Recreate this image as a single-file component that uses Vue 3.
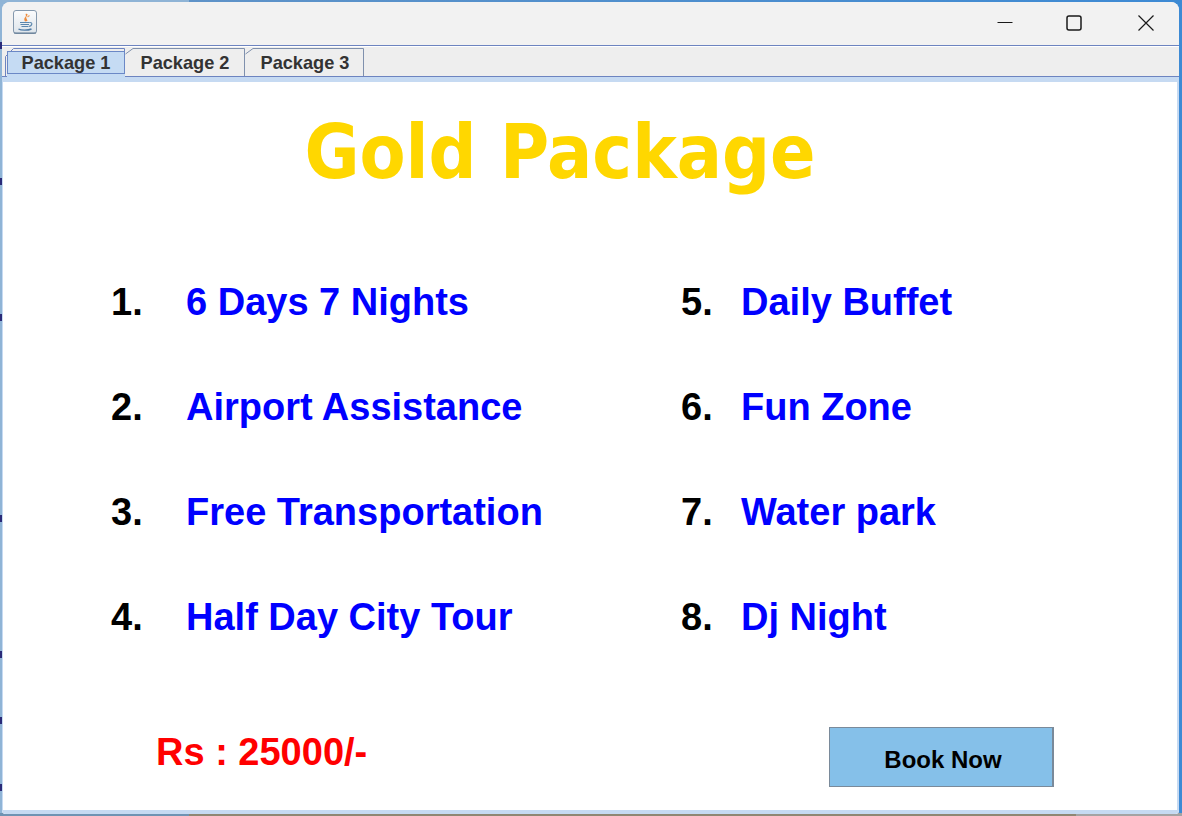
<template>
  <div class="desktop">
    <span v-for="y in marks" :key="y" class="mark" :style="{ top: y + 'px' }"></span>
    <div class="strip"></div>
    <div class="window">
      <header class="titlebar">
        <div class="appicon">
          <svg width="24" height="24" viewBox="0 0 24 24">
            <defs>
              <linearGradient id="ig" x1="0" y1="0" x2="0" y2="1">
                <stop offset="0" stop-color="#fbfcfd" />
                <stop offset="1" stop-color="#dde4ea" />
              </linearGradient>
            </defs>
            <rect x="0.5" y="0.5" width="23" height="23" rx="2.5" fill="url(#ig)" stroke="#8498ad" />
            <path d="M1 23 H23" stroke="#5c7690" stroke-width="1" />
            <path d="M12.5 4 C14.5 3.5 15.5 4.5 13.5 6.5 C12.5 7.5 14 9 14.5 11 L12 11.5 C10.5 9.5 11.5 8 12.5 6.8 C13 6 13 5 12.5 4 Z" fill="#ee8a3c" />
            <path d="M14.5 7 L16.5 5.5" stroke="#f0a060" stroke-width="1.2" />
            <path d="M7 12.5 H16.5 M7.5 14.5 H16 M8.5 16.5 H15" stroke="#5b86ad" stroke-width="1.2" fill="none" />
            <path d="M16.5 12.5 C20 12 19.5 16 15.5 16.5" fill="none" stroke="#5b86ad" stroke-width="1.1" />
            <path d="M5.5 19 C8 20.5 15 20.5 18.5 19" fill="none" stroke="#4f7ba6" stroke-width="1.4" />
          </svg>
        </div>
        <div class="controls">
          <button class="ctl">
            <svg width="16" height="16" viewBox="0 0 16 16"><path d="M0.5 7.5 H15.5" stroke="#1a1a1a" stroke-width="1" /></svg>
          </button>
          <button class="ctl">
            <svg width="16" height="16" viewBox="0 0 16 16"><rect x="1" y="1" width="14" height="14" rx="2" fill="none" stroke="#1a1a1a" stroke-width="1.5" /></svg>
          </button>
          <button class="ctl close">
            <svg width="16" height="16" viewBox="0 0 16 16"><path d="M0.5 0.5 L15.5 15.5 M15.5 0.5 L0.5 15.5" stroke="#1a1a1a" stroke-width="1.2" /></svg>
          </button>
        </div>
      </header>
      <nav class="tabs">
        <div v-for="(t, i) in tabs" :key="t" class="tab" :class="{ active: i === 0 }">
          <svg class="outline" width="120" height="28" viewBox="0 0 120 28">
            <path v-if="i === 0" d="M0.5 28 V8.5 L8.5 0.5 H119.5 V28" fill="none" stroke="#6d84c0" />
            <path v-else :d="i === 2 ? 'M0.5 6 L8 0.5 H118.5 V28' : 'M0.5 6 L8 0.5 H119.5 V28'" fill="none" stroke="#7f90ad" />
          </svg>
          <span class="label">{{ t }}</span>
        </div>
      </nav>
      <main class="panel">
        <h1 class="title">Gold Package</h1>
        <div class="list">
          <div class="col first">
            <div v-for="(it, i) in left" :key="it" class="row">
              <span class="num">{{ i + 1 }}.</span><span class="txt">{{ it }}</span>
            </div>
          </div>
          <div class="col second">
            <div v-for="(it, i) in right" :key="it" class="row">
              <span class="num">{{ i + 5 }}.</span><span class="txt">{{ it }}</span>
            </div>
          </div>
        </div>
        <footer class="foot">
          <span class="price">Rs : 25000/-</span>
          <button class="book">Book Now</button>
        </footer>
      </main>
    </div>
  </div>
</template>

<script setup>
const marks = [42, 178, 314, 515, 651, 717, 784]
const tabs = ['Package 1', 'Package 2', 'Package 3']
const left = ['6 Days 7 Nights', 'Airport Assistance', 'Free Transportation', 'Half Day City Tour']
const right = ['Daily Buffet', 'Fun Zone', 'Water park', 'Dj Night']
</script>

<style>
html, body { margin: 0; overflow: hidden; }
</style>

<style scoped>
.desktop {
  position: relative;
  width: 1182px;
  height: 816px;
  box-sizing: border-box;
  padding: 2px 3px 2px 2px;
  background: linear-gradient(90deg, #8fb4d6 0, #8fb4d6 16%, #5f93c8 16%, #3d8ad4 100%);
  overflow: hidden;
  font-family: "Liberation Sans", Arial, sans-serif;
}
.mark {
  position: absolute;
  left: 0;
  width: 2px;
  height: 7px;
  background: #2a2a78;
}
.strip {
  position: absolute;
  left: 0;
  right: 0;
  bottom: 0;
  height: 3px;
  background: linear-gradient(90deg, #6f93b3 0, #6f93b3 16%, #8f8773 16%, #8f8773 91%, #a3a3a3 91%);
}
.window {
  position: relative;
  display: flex;
  flex-direction: column;
  height: 812px;
  background: #f1f1f1;
  border-radius: 8px 8px 4px 4px;
  overflow: hidden;
}
.titlebar {
  height: 43px;
  flex: none;
  display: flex;
  justify-content: space-between;
  align-items: flex-start;
  background: #f2f2f2;
  border-bottom: 1px solid #6d84c0;
}
.appicon {
  margin: 8px 0 0 11px;
  height: 24px;
}
.controls {
  display: flex;
  gap: 3px;
}
.ctl {
  width: 66px;
  height: 41px;
  padding: 0;
  border: 0;
  background: none;
  display: flex;
  align-items: center;
  justify-content: center;
}
.ctl.close {
  margin-left: 3px;
}
.tabs {
  height: 31px;
  flex: none;
  box-sizing: border-box;
  display: flex;
  align-items: flex-end;
  padding-left: 3px;
  background: #eeeeee;
  border-top: 1px solid #fff;
  border-bottom: 1px solid #6d84c0;
}
.tab {
  position: relative;
  box-sizing: border-box;
  width: 120px;
  height: 28px;
  text-align: center;
  font-size: 18.2px;
  font-weight: 700;
  line-height: 30px;
  color: #333;
}
.outline {
  position: absolute;
  left: 0;
  top: 0;
}
.label {
  position: relative;
  display: block;
}
.tab.active .label {
  box-sizing: border-box;
  margin: 3px 0 0 2px;
  width: 118px;
  height: 23px;
  line-height: 23px;
  background: #c5dbf3;
  border: 1px solid #6b88c6;
}
.tab.active::after {
  content: "";
  position: absolute;
  left: 2px;
  top: 26px;
  width: 118px;
  height: 7px;
  background: #c5dbf3;
}
.panel {
  flex: 1;
  display: flex;
  flex-direction: column;
  background: #fff;
  border-top: 5px solid #c6daf2;
  border-bottom: 4px solid #c6daf2;
  border-right: 2px solid #c6daf2;
  border-left: 1px solid #c6daf2;
}
.title {
  margin: 26px 0 0;
  width: 1114px;
  text-align: center;
  font-family: "DejaVu Sans", sans-serif;
  font-stretch: condensed;
  font-size: 74.6px;
  font-weight: 700;
  line-height: 90px;
  color: #ffd700;
}
.list {
  display: flex;
  margin-top: 83px;
  padding-left: 108px;
}
.col.first { width: 570px; }
.row {
  display: flex;
  height: 105px;
  font-size: 38px;
  font-weight: 700;
  line-height: 42px;
}
.first .num { width: 75px; }
.second .num { width: 60px; }
.num { color: #000; }
.txt { color: #0000ff; }
.foot {
  display: flex;
  justify-content: space-between;
  align-items: flex-start;
  padding: 0 123px 0 153px;
  margin-top: 28px;
}
.price {
  margin-top: 2px;
  font-size: 38px;
  font-weight: 700;
  line-height: 42px;
  color: #ff0000;
}
.book {
  box-sizing: border-box;
  width: 225px;
  height: 60px;
  margin-top: -2px;
  padding: 6px 0 0 4px;
  border: 1px solid #7a8a9a;
  border-right-width: 2px;
  background: #85c0e9;
  font-family: inherit;
  font-size: 24px;
  font-weight: 700;
  color: #000;
}
</style>
